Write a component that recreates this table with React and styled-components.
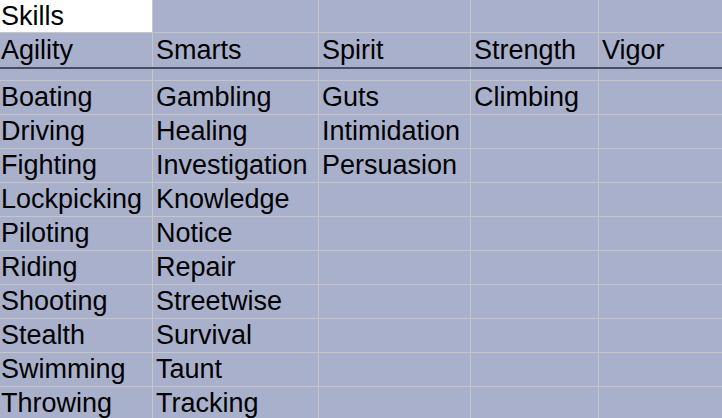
import * as React from 'react'
import styled, { createGlobalStyle } from 'styled-components'

const GlobalStyle = createGlobalStyle`
  html, body {
    margin: 0;
    padding: 0;
    background-color: #a9b0cb;
    overflow: hidden;
  }
`

const Sheet = styled.div`
  width: 722px;
  height: 418px;
  overflow: hidden;
  background-color: #a9b0cb;
  font-family: 'Liberation Sans', Arial, sans-serif;
  font-size: 27px;
  color: #000000;
`

const Row = styled.div`
  display: grid;
  grid-template-columns: 153px 166px 152px 128px 1fr;
  height: ${props => props.$height}px;
  border-bottom: ${props => (props.$thick ? '2px solid #474d60' : '1px solid #c8c6c2')};
`

const Cell = styled.div`
  line-height: 30px;
  padding: ${props => props.$top || 1}px 0 0 3px;
  border-right: 1px solid #c8c6c2;
  background-color: ${props => (props.$white ? '#ffffff' : 'transparent')};
  white-space: nowrap;
  overflow: hidden;
  &:first-child {
    padding-left: 1px;
  }
  &:last-child {
    border-right: none;
  }
`

const attributes = ['Agility', 'Smarts', 'Spirit', 'Strength', 'Vigor']

const skills = {
  Agility: ['Boating', 'Driving', 'Fighting', 'Lockpicking', 'Piloting', 'Riding', 'Shooting', 'Stealth', 'Swimming', 'Throwing'],
  Smarts: ['Gambling', 'Healing', 'Investigation', 'Knowledge', 'Notice', 'Repair', 'Streetwise', 'Survival', 'Taunt', 'Tracking'],
  Spirit: ['Guts', 'Intimidation', 'Persuasion'],
  Strength: ['Climbing'],
  Vigor: [],
}

const ROWS = 10

export default function App() {
  const dataRows = []
  for (let i = 0; i < ROWS; i++) {
    dataRows.push(
      <Row key={i} $height={33}>
        {attributes.map(attr => (
          <Cell key={attr}>{skills[attr][i] || ''}</Cell>
        ))}
      </Row>,
    )
  }

  return (
    <Sheet>
      <GlobalStyle />
      <Row $height={32}>
        <Cell $white>Skills</Cell>
        {attributes.slice(1).map(attr => (
          <Cell key={attr} />
        ))}
      </Row>
      <Row $height={34} $thick>
        {attributes.map(attr => (
          <Cell key={attr} $top={2}>
            {attr}
          </Cell>
        ))}
      </Row>
      <Row $height={11}>
        {attributes.map(attr => (
          <Cell key={attr} />
        ))}
      </Row>
      {dataRows}
    </Sheet>
  )
}
